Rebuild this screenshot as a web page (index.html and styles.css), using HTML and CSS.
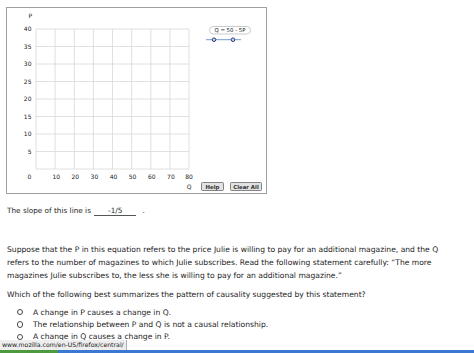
FILE: index.html
```html
<!DOCTYPE html>
<html>
<head>
<meta charset="utf-8">
<link rel="stylesheet" href="styles.css">
</head>
<body>
<div class="page">
  <div class="graph-frame">
    <svg class="graph" width="261" height="187" viewBox="6 7 261 187">
      <g class="grid">
        <line x1="35" y1="28" x2="35" y2="168"/>
        <line x1="54.1" y1="28" x2="54.1" y2="168"/>
        <line x1="73.3" y1="28" x2="73.3" y2="168"/>
        <line x1="92.4" y1="28" x2="92.4" y2="168"/>
        <line x1="111.5" y1="28" x2="111.5" y2="168"/>
        <line x1="130.6" y1="28" x2="130.6" y2="168"/>
        <line x1="149.8" y1="28" x2="149.8" y2="168"/>
        <line x1="168.9" y1="28" x2="168.9" y2="168"/>
        <line x1="188" y1="28" x2="188" y2="168"/>
        <line x1="35" y1="28" x2="188" y2="28"/>
        <line x1="35" y1="45.5" x2="188" y2="45.5"/>
        <line x1="35" y1="63" x2="188" y2="63"/>
        <line x1="35" y1="80.5" x2="188" y2="80.5"/>
        <line x1="35" y1="98" x2="188" y2="98"/>
        <line x1="35" y1="115.5" x2="188" y2="115.5"/>
        <line x1="35" y1="133" x2="188" y2="133"/>
        <line x1="35" y1="150.5" x2="188" y2="150.5"/>
        <line x1="35" y1="168" x2="188" y2="168"/>
      </g>
      <g class="ylab">
        <text x="31" y="17">P</text>
        <text x="30.5" y="30.2">40</text>
        <text x="30.5" y="47.7">35</text>
        <text x="30.5" y="65.2">30</text>
        <text x="30.5" y="82.7">25</text>
        <text x="30.5" y="100.2">20</text>
        <text x="30.5" y="117.7">15</text>
        <text x="30.5" y="135.2">10</text>
        <text x="30.5" y="152.7">5</text>
      </g>
      <g class="xlab">
        <text x="28.5" y="178">0</text>
        <text x="55.3" y="178">10</text>
        <text x="74.3" y="178">20</text>
        <text x="93.4" y="178">30</text>
        <text x="112.5" y="178">40</text>
        <text x="131.6" y="178">50</text>
        <text x="150.8" y="178">60</text>
        <text x="169.9" y="178">70</text>
        <text x="188" y="178">80</text>
        <text x="188" y="188">Q</text>
      </g>
      <g class="btn">
        <rect x="200.5" y="181.5" width="22" height="8" rx="1"/>
        <text x="211.5" y="187.8">Help</text>
        <rect x="229.5" y="181.5" width="31" height="8" rx="1"/>
        <text x="245" y="187.8">Clear All</text>
      </g>
      <g class="legend">
        <rect x="208.5" y="25.5" width="41" height="7.5" rx="3.7"/>
        <text x="229" y="31.3">Q = 50 - 5P</text>
        <line class="curve" x1="205" y1="38.7" x2="240" y2="38.7"/>
        <circle cx="213" cy="38.7" r="1.8"/>
        <circle cx="232" cy="38.7" r="1.8"/>
      </g>
    </svg>
  </div>

  <p class="slope">The slope of this line is <span class="blank">-1/5</span> .</p>

  <p class="para">Suppose that the P in this equation refers to the price Julie is willing to pay for an additional magazine, and the Q<br>refers to the number of magazines to which Julie subscribes. Read the following statement carefully: “The more<br>magazines Julie subscribes to, the less she is willing to pay for an additional magazine.”</p>

  <p class="question">Which of the following best summarizes the pattern of causality suggested by this statement?</p>

  <ul class="options">
    <li><span class="radio"></span>A change in P causes a change in Q.</li>
    <li><span class="radio"></span>The relationship between P and Q is not a causal relationship.</li>
    <li><span class="radio"></span>A change in Q causes a change in P.</li>
  </ul>
</div>

<div class="statusbar">www.mozilla.com/en-US/firefox/central/</div>
<div class="taskbar"><span class="start"></span></div>
</body>
</html>
```

FILE: styles.css
```css
html, body {
  margin: 0;
  padding: 0;
  background: #ffffff;
}
body {
  width: 474px;
  height: 353px;
  overflow: hidden;
  position: relative;
  font-family: "DejaVu Sans", Verdana, sans-serif;
  color: #1c1c1c;
}
.page {
  padding: 7px 0 0 6px;
}
.graph-frame {
  width: 259px;
  height: 185px;
  border: 1px solid #a0a0a0;
}
.graph {
  display: block;
}
.grid line {
  stroke: #d8d8d8;
  stroke-width: 0.8;
}
.ylab text {
  font-family: "DejaVu Sans", sans-serif;
  font-size: 6px;
  fill: #222;
  text-anchor: end;
}
.xlab text {
  font-family: "DejaVu Sans", sans-serif;
  font-size: 6px;
  fill: #222;
  text-anchor: middle;
}
.btn rect {
  fill: #e2e2e2;
  stroke: #555;
  stroke-width: 0.7;
}
.btn text {
  font-family: "DejaVu Sans", sans-serif;
  font-size: 5.4px;
  font-weight: bold;
  fill: #333;
  text-anchor: middle;
}
.legend rect {
  fill: #ffffff;
  stroke: #b4b4b4;
  stroke-width: 0.7;
}
.legend text {
  font-family: "DejaVu Sans", sans-serif;
  font-size: 5.4px;
  fill: #222;
  text-anchor: middle;
}
.legend .curve {
  stroke: #6a8cc8;
  stroke-width: 0.9;
}
.legend circle {
  fill: #c8d4ea;
  stroke: #2c3f78;
  stroke-width: 1;
}
p {
  margin: 0;
  font-size: 7.6px;
}
.slope {
  margin: 12px 0 0 1px;
  line-height: 10px;
  font-size: 7.3px;
}
.blank {
  display: inline-block;
  width: 42px;
  text-align: center;
  border-bottom: 1px solid #555;
  line-height: 9px;
  margin: 0 4px 0 1px;
}
.para {
  margin: 27px 0 0 1px;
  line-height: 13px;
}
.question {
  margin: 6px 0 0 1px;
  line-height: 13px;
}
.options {
  list-style: none;
  margin: 5px 0 0 0;
  padding: 0 0 0 11px;
  font-size: 7.6px;
}
.options li {
  display: flex;
  align-items: center;
  height: 12.3px;
}
.radio {
  width: 4.4px;
  height: 4.4px;
  border: 1.3px solid #4a4a4a;
  border-radius: 50%;
  margin-right: 9.6px;
  background: #fff;
}
.statusbar {
  position: absolute;
  left: 0;
  top: 340px;
  width: 124px;
  height: 10px;
  padding-left: 2px;
  background: #eeeeee;
  border-right: 1px solid #b0b0b0;
  font-size: 6.2px;
  line-height: 10px;
  color: #222;
  white-space: nowrap;
  overflow: hidden;
}
.taskbar {
  position: absolute;
  left: 0;
  top: 350px;
  width: 474px;
  height: 3px;
  background: #3a78d4;
  display: flex;
}
.start {
  width: 58px;
  height: 3px;
  background: #4e9a3e;
}
```
